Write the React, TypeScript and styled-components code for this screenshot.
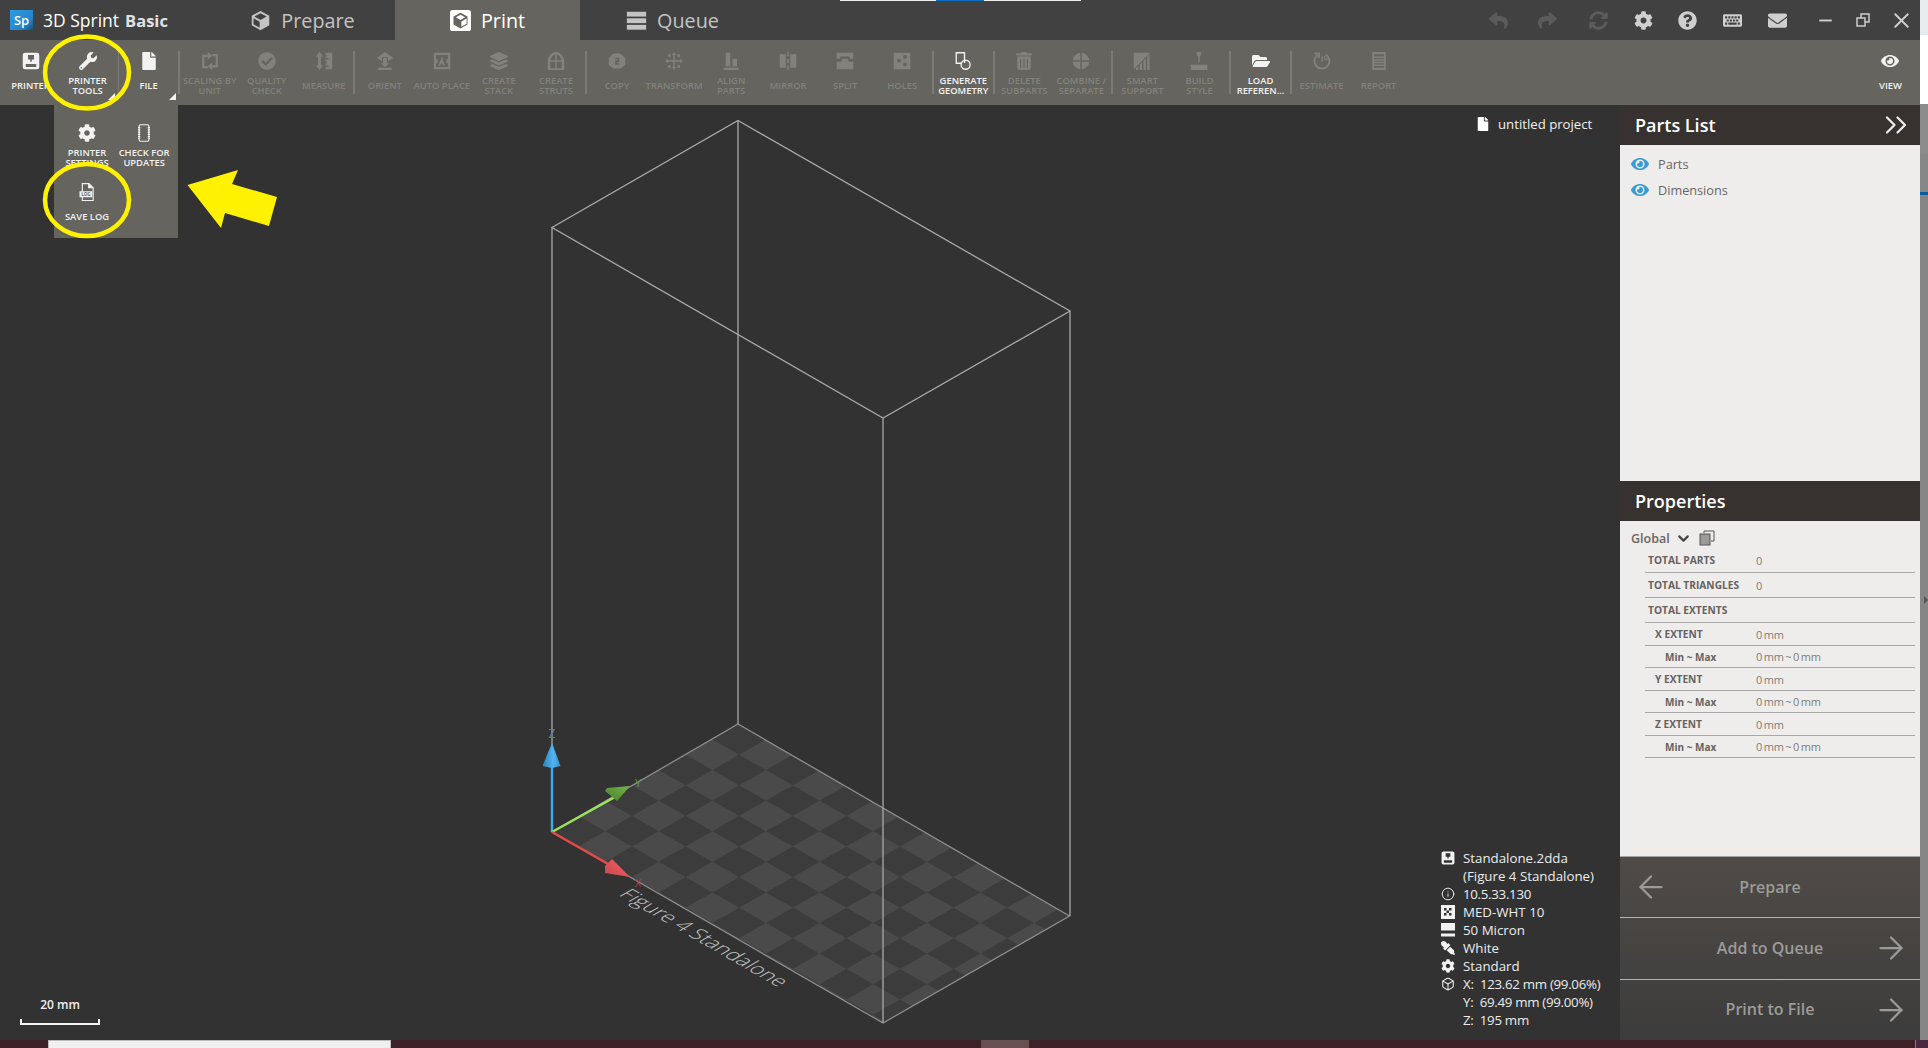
import React from "react";
import styled, { createGlobalStyle } from "styled-components";
import {
  FaCheckCircle,
  FaCog,
  FaEnvelope,
  FaEye,
  FaEyeDropper,
  FaFile,
  FaFolderOpen,
  FaKeyboard,
  FaLayerGroup,
  FaQuestionCircle,
  FaReply,
  FaShare,
  FaSyncAlt,
  FaTrashAlt,
  FaWrench,
} from "react-icons/fa";
import { ArrowLeft, ArrowRight, Box, ChevronDown, ChevronsRight, Info, X } from "lucide-react";

const GlobalStyle = createGlobalStyle`
  html, body {
    margin: 0;
    padding: 0;
    background: #323232;
    font-family: "Open Sans", "Liberation Sans", sans-serif;
  }
`;

const Page = styled.div`
  position: relative;
  width: 1928px;
  height: 1048px;
  overflow: hidden;
  display: flex;
  flex-direction: column;
`;

const Desktop = styled.div`
  flex: 1;
  min-height: 0;
  display: flex;
`;

const AppWindow = styled.div`
  position: relative;
  width: 1920px;
  display: flex;
  flex-direction: column;
`;

const TitleBar = styled.header`
  height: 40px;
  flex: none;
  display: flex;
  align-items: stretch;
  background: #414141;
`;

const Brand = styled.div`
  width: 210px;
  display: flex;
  align-items: center;
  padding-left: 10px;
  box-sizing: border-box;
  color: #fff;
  font-size: 17.5px;
  white-space: nowrap;
`;

const Logo = styled.div`
  width: 23px;
  height: 20px;
  margin-right: 10px;
  display: flex;
  align-items: center;
  justify-content: center;
  background: linear-gradient(135deg, #2f9be0 0%, #2585c8 70%, #14507f 100%);
  color: #fff;
  font-size: 13px;
  font-weight: 600;
`;

const BrandSub = styled.span`
  margin-left: 6px;
  font-size: 16.5px;
  font-weight: 700;
  color: #e2e2e2;
`;

const Tab = styled.div<{ $active?: boolean }>`
  width: 185px;
  display: flex;
  align-items: center;
  justify-content: center;
  gap: 10px;
  font-size: 19.8px;
  background: ${(p) => (p.$active ? "#66645e" : "transparent")};
  color: ${(p) => (p.$active ? "#fff" : "#c4c4c4")};
  svg {
    width: 21px;
    height: 21px;
  }
`;

const TopLine = styled.div`
  position: absolute;
  top: 0;
  left: 840px;
  width: 241px;
  height: 1px;
  background: linear-gradient(90deg, #eee 0 96px, #0f6cc0 96px 144px, #eee 144px);
`;

const WindowTools = styled.div`
  margin-left: auto;
  display: flex;
  align-items: center;
`;

const WindowTool = styled.div<{ $dim?: boolean; $w?: number; $icon?: number; $gap?: number }>`
  width: ${(p) => p.$w ?? 45}px;
  margin-left: ${(p) => p.$gap ?? 0}px;
  display: flex;
  justify-content: center;
  align-items: center;
  color: ${(p) => (p.$dim ? "#5b5b5b" : "#cfcfcf")};
  svg {
    width: ${(p) => p.$icon ?? 19}px;
    height: ${(p) => p.$icon ?? 19}px;
  }
`;

const ToolBar = styled.nav`
  height: 65px;
  flex: none;
  display: flex;
  align-items: flex-start;
  padding-left: 2px;
  box-sizing: border-box;
  background: #66645e;
`;

const ToolButton = styled.div<{ $off?: boolean }>`
  position: relative;
  width: 57.05px;
  flex: none;
  padding-top: 12px;
  display: flex;
  flex-direction: column;
  align-items: center;
  color: ${(p) => (p.$off ? "#82817b" : "#f2f2f2")};
  svg {
    width: 18px;
    height: 18px;
  }
`;

const Corner = styled.span`
  position: absolute;
  right: 1px;
  top: 53px;
  width: 0;
  height: 0;
  border-left: 7px solid transparent;
  border-bottom: 7px solid #f4f4f4;
`;

const ToolLabel = styled.div`
  height: 20px;
  margin-top: 6px;
  display: flex;
  align-items: center;
  justify-content: center;
  text-align: center;
  white-space: pre;
  font-size: 9.4px;
  line-height: 10px;
  font-weight: 600;
`;

const ToolSep = styled.div<{ $faint?: boolean }>`
  width: 4px;
  flex: none;
  height: 43px;
  margin-top: 11px;
  display: flex;
  justify-content: center;
  &::before {
    content: "";
    width: ${(p) => (p.$faint ? 1 : 2)}px;
    background: #7b7a74;
  }
`;

const ViewButton = styled(ToolButton)`
  margin-left: auto;
  margin-right: 1px;
`;

const Body = styled.div`
  flex: 1;
  min-height: 0;
  display: flex;
`;

const Viewport = styled.main`
  position: relative;
  flex: 1;
  background: #323232;
`;

const Scene = styled.svg`
  display: block;
  width: 1620px;
  height: 935px;
`;

const Dropdown = styled.div`
  position: absolute;
  top: 0;
  left: 54px;
  width: 124px;
  height: 133px;
  box-sizing: border-box;
  padding: 7px 0 0 4.5px;
  display: grid;
  grid-template-columns: 57.1px 57.1px;
  grid-auto-rows: min-content;
  row-gap: 3px;
  background: #66645e;
`;

const ProjectName = styled.div`
  position: absolute;
  top: 10px;
  left: 1477px;
  display: flex;
  align-items: center;
  gap: 9px;
  color: #f0f0f0;
  font-size: 13.2px;
  svg {
    width: 12px;
    height: 14px;
    color: #fff;
  }
`;

const ScaleBar = styled.div`
  position: absolute;
  left: 20px;
  bottom: 15px;
  width: 80px;
  text-align: center;
  color: #f0f0f0;
  font-size: 12px;
  font-weight: 600;
  &::after {
    content: "";
    display: block;
    height: 4px;
    margin-top: 6px;
    border: 2px solid #f4f4f4;
    border-top: none;
  }
`;

const InfoBlock = styled.div`
  position: absolute;
  left: 1441px;
  bottom: 11px;
  color: #ececec;
  font-size: 13.3px;
  line-height: 18px;
`;

const InfoRow = styled.div<{ $tight?: boolean }>`
  height: 18px;
  display: flex;
  align-items: center;
  gap: 8px;
  white-space: pre;
  letter-spacing: ${(p) => (p.$tight ? "-0.3px" : "0")};
`;

const InfoIcon = styled.span`
  width: 14px;
  height: 14px;
  display: flex;
  align-items: center;
  justify-content: center;
  color: #f2f2f2;
  svg {
    width: 14px;
    height: 14px;
  }
`;

const SidePanel = styled.aside`
  width: 300px;
  flex: none;
  display: flex;
  flex-direction: column;
`;

const PanelHeader = styled.div`
  height: 40px;
  flex: none;
  display: flex;
  align-items: center;
  justify-content: space-between;
  padding: 0 6px 0 15px;
  box-sizing: border-box;
  background: #37322f;
  color: #fff;
  font-size: 18px;
  font-weight: 600;
  svg {
    width: 36px;
    height: 36px;
    color: #ececec;
  }
`;

const PartsBody = styled.div`
  height: 336px;
  flex: none;
  box-sizing: border-box;
  padding-top: 6px;
  background: #eeedeb;
`;

const PartRow = styled.div`
  height: 26px;
  display: flex;
  align-items: center;
  gap: 8px;
  padding-left: 10px;
  color: #6a6663;
  font-size: 12.7px;
  svg {
    width: 20px;
    height: 16px;
    color: #3b9bd4;
  }
`;

const PropsBody = styled.div`
  flex: 1;
  min-height: 0;
  box-sizing: border-box;
  background: #eeedeb;
  border-bottom: 1px solid #a5a5a5;
`;

const ScopeRow = styled.div`
  height: 27px;
  box-sizing: border-box;
  padding: 7px 0 0 11px;
  display: flex;
  align-items: center;
  color: #6a6663;
  font-size: 12.5px;
  font-weight: 600;
`;

const ScopeChevron = styled(ChevronDown)`
  width: 17px;
  height: 17px;
  margin-left: 5px;
  color: #444;
`;

const ScopeCopy = styled.svg`
  width: 16px;
  height: 16px;
  margin-left: 7px;
  color: #555;
`;

const PropRow = styled.div<{ $level: number }>`
  height: ${(p) => [25, 23, 22][p.$level]}px;
  box-sizing: border-box;
  margin: 0 5px 0 25px;
  display: flex;
  align-items: center;
  border-bottom: 1px solid #a9a9a9;
  color: #807d7a;
  font-size: 11px;
  word-spacing: -1.5px;
`;

const PropName = styled.div<{ $level: number }>`
  width: 111px;
  flex: none;
  box-sizing: border-box;
  padding-left: ${(p) => [3, 10, 20][p.$level]}px;
  color: #66625f;
  font-size: ${(p) => (p.$level === 2 ? 10 : 10.2)}px;
  font-weight: 700;
  white-space: nowrap;
  word-spacing: 0;
`;

const Actions = styled.div`
  height: 183px;
  flex: none;
  display: flex;
  flex-direction: column;
  background: linear-gradient(#504b47, #3c3c3c);
`;

const ActionButton = styled.div`
  position: relative;
  flex: 1;
  display: flex;
  align-items: center;
  justify-content: center;
  padding-bottom: 1px;
  color: #9c9b99;
  font-size: 16px;
  font-weight: 600;
  & + & {
    border-top: 1px solid #b4b4b2;
  }
`;

const ActionArrow = styled.span<{ $left?: boolean }>`
  position: absolute;
  top: 50%;
  margin-top: -18px;
  ${(p) => (p.$left ? "left: 12.5px;" : "right: 11.5px;")}
  height: 36px;
  color: #9c9b99;
  svg {
    width: 36px;
    height: 36px;
  }
`;

const Gutter = styled.div`
  position: relative;
  width: 8px;
  flex: none;
  display: flex;
  flex-direction: column;
  background: #868686;
  &::after {
    content: "";
    position: absolute;
    top: 596px;
    left: 4px;
    border-left: 4px solid #555;
    border-top: 4px solid transparent;
    border-bottom: 4px solid transparent;
  }
`;

const GutterBand = styled.div<{ $h: number; $c: string }>`
  height: ${(p) => p.$h}px;
  background: ${(p) => p.$c};
`;

const TaskBar = styled.footer`
  position: relative;
  height: 8px;
  flex: none;
  display: flex;
  overflow: hidden;
  padding-left: 48px;
  background: #3e2029;
`;

const TaskWindow = styled.div`
  width: 343px;
  box-sizing: border-box;
  background: #f0f0f0;
  border: 1px solid #bcbcbc;
  border-bottom: none;
`;

const TaskActive = styled.div`
  width: 48px;
  margin-left: 590px;
  background: #674f52;
`;

const Clock = styled.div`
  margin-left: auto;
  margin-right: 70px;
  padding-top: 5px;
  color: #fff;
  font-size: 11px;
  line-height: 14px;
`;

const TaskEnd = styled.div`
  position: absolute;
  right: 0;
  top: 0;
  bottom: 0;
  width: 12px;
  background: #4a2840;
  border-left: 1px solid #8b7a80;
`;

const Annotations = styled.svg`
  position: absolute;
  top: 0;
  left: 0;
  width: 300px;
  height: 250px;
  pointer-events: none;
`;

const CubeIcon = () => (
  <svg viewBox="0 0 24 24" fill="currentColor">
    <path d="M12 1 22 6.5v11L12 23 2 17.500v-11zM12 3.600 5 7.500l7 4 7-4zM4 9.300v7l7 4v-7z" fillRule="evenodd" />
  </svg>
);

const PrintCubeIcon = () => (
  <svg viewBox="0 0 24 24" fill="currentColor">
    <path
      d="M3 0h18a3 3 0 0 1 3 3v18a3 3 0 0 1-3 3H3a3 3 0 0 1-3-3V3a3 3 0 0 1 3-3zM12 3 4 7.500v9l8 4.500 8-4.500v-9zM12 5.300 17.300 8.300 12 11.300 6.700 8.300zM13 13l6-3.300v6l-6 3.300z"
      fillRule="evenodd"
    />
  </svg>
);

const BarsIcon = () => (
  <svg viewBox="0 0 24 24" fill="currentColor">
    <rect x="1" y="2" width="22" height="5.500" />
    <rect x="1" y="9.500" width="22" height="5.500" />
    <rect x="1" y="17" width="22" height="5.500" />
  </svg>
);

const PrinterFaceIcon = () => (
  <svg viewBox="0 0 24 24" fill="currentColor">
    <path
      d="M4 1h16a3 3 0 0 1 3 3v16a3 3 0 0 1-3 3H4a3 3 0 0 1-3-3V4a3 3 0 0 1 3-3zM8 4v6h3v3h2v-3h3V4zM5 16v4h14v-4z"
      fillRule="evenodd"
    />
  </svg>
);

const ScalingIcon = () => (
  <svg viewBox="0 0 24 24" fill="currentColor">
    <path d="M9 5H3v15h6M15 19h6V4h-6" fill="none" stroke="currentColor" strokeWidth="3" />
    <path d="M9 0 15 5 9 10zM15 14 9 19l6 5z" />
  </svg>
);

const MeasureIcon = () => (
  <svg viewBox="0 0 24 24" fill="currentColor">
    <path d="M6 0 11 6H8v12h3l-5 6-5-6h3V6H1z" />
    <path d="M14 1h9v22h-9v-3h4v-2h-4v-3h2v-2h-2V10h4V8h-4V6h2V4h-2z" />
  </svg>
);

const OrientIcon = () => (
  <svg viewBox="0 0 24 24" fill="currentColor">
    <path d="M12 0 23 8l-7 4V7H8v5L1 8z" />
    <path d="M9.500 8h5v7H18l-6 5-6-5h3.500z" />
    <rect x="3" y="21" width="18" height="3" />
  </svg>
);

const AutoPlaceIcon = () => (
  <svg viewBox="0 0 24 24" fill="currentColor">
    <path d="M1 1h22v22H1zM4 4v5h2v6H4v5h16v-5h-2V9h2V4z" fillRule="evenodd" />
    <path d="M12 6 16 18h-2.500l-.7-2.500h-2.600l-.7 2.500H7z" />
  </svg>
);

const StrutsIcon = () => (
  <svg viewBox="0 0 24 24" fill="currentColor">
    <path
      d="M1 24V13C1 6 6 0 12 0s11 6 11 13v11zM11 3.200C7.500 4 5 7.500 4.600 11H11zM13 3.200V11h6.400C19 7.500 16.500 4 13 3.200zM4.500 13v8.500H11V13zM13 13v8.500h6.500V13z"
      fillRule="evenodd"
    />
  </svg>
);

const CopyCubeIcon = () => (
  <svg viewBox="0 0 24 24" fill="currentColor">
    <path
      d="M7 2h9l7 6v9l-6 5H7l-6-5V8zM9.500 7.500v2h3.500v1.500H9.500V17H15v-2h-3v-1.500h3V7.500z"
      fillRule="evenodd"
    />
  </svg>
);

const TransformIcon = () => (
  <svg viewBox="0 0 24 24" fill="currentColor">
    <path d="M12 0 15 4h-2v7h7v-2l4 3-4 3v-2h-7v7h2l-3 4-3-4h2v-7H4v2l-4-3 4-3v2h7V4H9z" />
    <rect x="4" y="3" width="3.500" height="3.500" />
    <rect x="16.500" y="3" width="3.500" height="3.500" />
    <rect x="4" y="17.500" width="3.500" height="3.500" />
    <rect x="16.500" y="17.500" width="3.500" height="3.500" />
  </svg>
);

const AlignIcon = () => (
  <svg viewBox="0 0 24 24" fill="currentColor">
    <rect x="5" y="1" width="6" height="18" />
    <rect x="14" y="9" width="6" height="10" />
    <rect x="2" y="21" width="20" height="3" />
  </svg>
);

const MirrorIcon = () => (
  <svg viewBox="0 0 24 24" fill="currentColor">
    <rect x="1" y="3" width="8" height="18" />
    <rect x="15" y="3" width="8" height="18" />
    <rect x="11" y="0" width="2" height="6" />
    <rect x="11" y="9" width="2" height="6" />
    <rect x="11" y="18" width="2" height="6" />
  </svg>
);

const SplitIcon = () => (
  <svg viewBox="0 0 24 24" fill="currentColor">
    <path d="M1 1h22v8h-4l-1-3H6L5 9H1z" />
    <path d="M8 9h8l1 4h6v10H1V13h6z" />
  </svg>
);

const HolesIcon = () => (
  <svg viewBox="0 0 24 24" fill="currentColor">
    <path
      d="M1 1h22v22H1zM16 4a2.500 2.500 0 1 0 0 5 2.500 2.500 0 0 0 0-5zM8 9a2.500 2.500 0 1 0 0 5 2.500 2.500 0 0 0 0-5zM16 14a2.500 2.500 0 1 0 0 5 2.500 2.500 0 0 0 0-5z"
      fillRule="evenodd"
    />
  </svg>
);

const GeometryIcon = () => (
  <svg viewBox="0 0 24 24" fill="none" stroke="currentColor" strokeWidth="1.800">
    <path d="M14 14.500V1H3v14h7" />
    <circle cx="15.500" cy="17" r="6" />
  </svg>
);

const CombineIcon = () => (
  <svg viewBox="0 0 24 24" fill="currentColor">
    <path d="M11 1v10H1A11 11 0 0 1 11 1zM13 1a11 11 0 0 1 10 10H13zM1 13h10v10A11 11 0 0 1 1 13zM13 13h10a11 11 0 0 1-10 10z" />
  </svg>
);

const SmartSupportIcon = () => (
  <svg viewBox="0 0 24 24" fill="currentColor">
    <path d="M1 1h22L1 23z" />
    <path d="M22 3v21h-3V6.500zM17 8.500V24h-3V11.500zM12 13.500V24H9v-7.500zM7 18.500V24H4v-2.500z" />
  </svg>
);

const BuildStyleIcon = () => (
  <svg viewBox="0 0 24 24" fill="currentColor">
    <path d="M9 0h6v4l-2 2v8h-2V6L9 4z" />
    <rect x="1" y="17" width="22" height="7" />
  </svg>
);

const EstimateIcon = () => (
  <svg viewBox="0 0 24 24" fill="none" stroke="currentColor" strokeWidth="2.500">
    <path d="M6 4A10 10 0 1 0 17 3.500" />
    <path d="M2 2h6v6" />
    <path d="M12 6v7M16 5.500l-1.500 3M19 9l-3 1.500" strokeWidth="2" />
  </svg>
);

const ReportIcon = () => (
  <svg viewBox="0 0 24 24" fill="currentColor">
    <path
      d="M3 0h18v24H3zM5.500 3v3h13V3zM5.500 8v1.500h13V8zM5.500 11.500V13h13v-1.500zM5.500 15v1.500h13V15zM5.500 18.500V21h13v-2.500z"
      fillRule="evenodd"
    />
  </svg>
);

const ChipIcon = () => (
  <svg viewBox="0 0 24 24" fill="none" stroke="currentColor">
    <rect x="5.500" y="1" width="13" height="22" rx="2" strokeWidth="1.600" />
    <path d="M5.500 4v16M18.500 4v16" strokeWidth="3" strokeDasharray="1.500 1.500" />
  </svg>
);

const SaveLogIcon = () => (
  <svg viewBox="0 0 24 24" fill="currentColor">
    <path d="M5 0h10l6 6v18H5zM6.500 1.500v21h13V7h-6V1.500z" fillRule="evenodd" />
    <rect x="2" y="11" width="17" height="8" />
    <text x="10.500" y="17.500" fontSize="6" textAnchor="middle" fill="#66645e" fontWeight="700">
      LOG
    </text>
  </svg>
);

const RestoreIcon = () => (
  <svg viewBox="0 0 24 24" fill="none" stroke="currentColor" strokeWidth="2.200">
    <rect x="3" y="9" width="12" height="12" />
    <path d="M9 9V3h12v12h-6" />
  </svg>
);

const MinimizeIcon = () => (
  <svg viewBox="0 0 24 24" fill="currentColor">
    <rect x="2" y="10.500" width="20" height="3" />
  </svg>
);

const CheckerIcon = () => (
  <svg viewBox="0 0 14 14" fill="currentColor">
    <path d="M0 0h14v14H0zM3 3v2.500h2.500V3zM8 3v2.500h2.500V3zM5.500 5.500V8H8V5.500zM3 8v2.500h2.500V8zM8 8v2.500h2.500V8z" fillRule="evenodd" />
  </svg>
);

const LayerIcon = () => (
  <svg viewBox="0 0 14 14" fill="currentColor">
    <rect x="0" y="0" width="14" height="7.500" />
    <rect x="0" y="10.500" width="14" height="3" />
  </svg>
);

const FlippedDropper = styled(FaEyeDropper)`
  transform: scaleX(-1);
`;

type Tool = { label: string; icon?: React.ReactNode; off?: boolean; flag?: boolean } | "sep" | "faint";

const tools: Tool[] = [
  { label: "PRINTER", icon: <PrinterFaceIcon /> },
  { label: "PRINTER\nTOOLS", icon: <FaWrench />, flag: true },
  "faint",
  { label: "FILE", icon: <FaFile />, flag: true },
  "sep",
  { label: "SCALING BY\nUNIT", icon: <ScalingIcon />, off: true },
  { label: "QUALITY\nCHECK", icon: <FaCheckCircle />, off: true },
  { label: "MEASURE", icon: <MeasureIcon />, off: true },
  "sep",
  { label: "ORIENT", icon: <OrientIcon />, off: true },
  { label: "AUTO PLACE", icon: <AutoPlaceIcon />, off: true },
  { label: "CREATE\nSTACK", icon: <FaLayerGroup />, off: true },
  { label: "CREATE\nSTRUTS", icon: <StrutsIcon />, off: true },
  "sep",
  { label: "COPY", icon: <CopyCubeIcon />, off: true },
  { label: "TRANSFORM", icon: <TransformIcon />, off: true },
  { label: "ALIGN\nPARTS", icon: <AlignIcon />, off: true },
  { label: "MIRROR", icon: <MirrorIcon />, off: true },
  { label: "SPLIT", icon: <SplitIcon />, off: true },
  { label: "HOLES", icon: <HolesIcon />, off: true },
  "sep",
  { label: "GENERATE\nGEOMETRY", icon: <GeometryIcon /> },
  "sep",
  { label: "DELETE\nSUBPARTS", icon: <FaTrashAlt />, off: true },
  { label: "COMBINE /\nSEPARATE", icon: <CombineIcon />, off: true },
  "sep",
  { label: "SMART\nSUPPORT", icon: <SmartSupportIcon />, off: true },
  { label: "BUILD\nSTYLE", icon: <BuildStyleIcon />, off: true },
  "sep",
  { label: "LOAD\nREFEREN...", icon: <FaFolderOpen /> },
  "sep",
  { label: "ESTIMATE", icon: <EstimateIcon />, off: true },
  { label: "REPORT", icon: <ReportIcon />, off: true },
];

const properties: { name: string; value?: string; level: number }[] = [
  { name: "TOTAL PARTS", value: "0", level: 0 },
  { name: "TOTAL TRIANGLES", value: "0", level: 0 },
  { name: "TOTAL EXTENTS", level: 0 },
  { name: "X EXTENT", value: "0 mm", level: 1 },
  { name: "Min ~ Max", value: "0 mm ~ 0 mm", level: 2 },
  { name: "Y EXTENT", value: "0 mm", level: 1 },
  { name: "Min ~ Max", value: "0 mm ~ 0 mm", level: 2 },
  { name: "Z EXTENT", value: "0 mm", level: 1 },
  { name: "Min ~ Max", value: "0 mm ~ 0 mm", level: 2 },
];

const info: { icon?: React.ReactNode; text: string; tight?: boolean }[] = [
  { icon: <PrinterFaceIcon />, text: "Standalone.2dda" },
  { text: "(Figure 4 Standalone)" },
  { icon: <Info strokeWidth={1.6} />, text: "10.5.33.130", tight: true },
  { icon: <CheckerIcon />, text: "MED-WHT 10" },
  { icon: <LayerIcon />, text: "50 Micron" },
  { icon: <FlippedDropper />, text: "White" },
  { icon: <FaCog />, text: "Standard" },
  { icon: <Box strokeWidth={1.8} />, text: "X:  123.62 mm (99.06%)", tight: true },
  { text: "Y:  69.49 mm (99.00%)", tight: true },
  { text: "Z:  195 mm", tight: true },
];

const Floor = () => (
  <>
    <defs>
      <pattern
        id="checker"
        patternUnits="userSpaceOnUse"
        width="2"
        height="2"
        patternTransform="matrix(26.8 -15.3 -26.8 -15.3 739.2 785.3)"
      >
        <rect width="2" height="2" fill="#4a4a4a" />
        <rect width="1" height="1" fill="#3c3c3c" />
        <rect x="1" y="1" width="1" height="1" fill="#3c3c3c" />
      </pattern>
      <linearGradient id="coneBlue" x1="0" x2="1">
        <stop offset="0" stopColor="#2f7fb5" />
        <stop offset="0.6" stopColor="#4fb6f2" />
        <stop offset="1" stopColor="#3a90c8" />
      </linearGradient>
      <linearGradient id="coneGreen" x1="0" x2="1" y1="1" y2="0">
        <stop offset="0" stopColor="#4d7d33" />
        <stop offset="1" stopColor="#72b545" />
      </linearGradient>
      <linearGradient id="coneRed" x1="0" x2="1" y1="1" y2="0">
        <stop offset="0" stopColor="#c8454a" />
        <stop offset="1" stopColor="#f8646a" />
      </linearGradient>
    </defs>
    <polygon points="552,832 738,724 1069.500,916 883,1023" fill="url(#checker)" stroke="#8d8d8d" strokeWidth="1.300" />
  </>
);

const BuildVolume = () => (
  <g fill="none" stroke="#a9a9a9" strokeWidth="1.300">
    <polygon points="738,120.500 1070,311 883,418 552,227.500" />
    <line x1="552" y1="227.500" x2="552" y2="832" />
    <line x1="738" y1="120.500" x2="738" y2="724" />
    <line x1="1070" y1="311" x2="1070" y2="916" />
    <line x1="883" y1="418" x2="883" y2="1023" />
  </g>
);

const Axes = () => (
  <g>
    <line x1="552" y1="832" x2="552" y2="765" stroke="#45a9e8" strokeWidth="2.400" />
    <polygon points="552,743 560.500,766 552,768 542.500,766" fill="url(#coneBlue)" />
    <text x="552" y="738" fontSize="12" textAnchor="middle" fill="#3f87b8">
      Z
    </text>
    <line x1="552" y1="832" x2="615" y2="797" stroke="#9be35a" strokeWidth="2.400" />
    <polygon points="630,786 617,801 605,791 607,788" fill="url(#coneGreen)" />
    <text x="638" y="787" fontSize="11" textAnchor="middle" fill="#5f9f3a">
      Y
    </text>
    <line x1="552" y1="832" x2="610" y2="865" stroke="#e84848" strokeWidth="2.400" />
    <polygon points="630,877 605,873 605,866 612,859" fill="url(#coneRed)" />
    <text x="638" y="887" fontSize="11" textAnchor="middle" fill="#b83a3a">
      X
    </text>
  </g>
);

export default function App() {
  return (
    <Page>
      <GlobalStyle />
      <Desktop>
        <AppWindow>
          <TitleBar>
            <Brand>
              <Logo>Sp</Logo>
              3D Sprint
              <BrandSub>Basic</BrandSub>
            </Brand>
            <Tab>
              <CubeIcon />
              Prepare
            </Tab>
            <Tab $active>
              <PrintCubeIcon />
              Print
            </Tab>
            <Tab>
              <BarsIcon />
              Queue
            </Tab>
            <TopLine />
            <WindowTools>
              <WindowTool $dim $w={41}><FaReply /></WindowTool>
              <WindowTool $dim $w={57}><FaShare /></WindowTool>
              <WindowTool $dim><FaSyncAlt /></WindowTool>
              <WindowTool><FaCog /></WindowTool>
              <WindowTool $w={44}><FaQuestionCircle /></WindowTool>
              <WindowTool><FaKeyboard /></WindowTool>
              <WindowTool><FaEnvelope /></WindowTool>
              <WindowTool $w={38} $icon={15} $gap={6.5}><MinimizeIcon /></WindowTool>
              <WindowTool $w={38} $icon={16}><RestoreIcon /></WindowTool>
              <WindowTool $w={38} $icon={25}><X strokeWidth={1.8} /></WindowTool>
            </WindowTools>
          </TitleBar>
          <ToolBar>
            {tools.map((tool, i) =>
              tool === "sep" || tool === "faint" ? (
                <ToolSep key={i} $faint={tool === "faint"} />
              ) : (
                <ToolButton key={i} $off={tool.off}>
                  {tool.icon}
                  <ToolLabel>{tool.label}</ToolLabel>
                  {tool.flag && <Corner />}
                </ToolButton>
              )
            )}
            <ViewButton>
              <FaEye />
              <ToolLabel>VIEW</ToolLabel>
            </ViewButton>
          </ToolBar>
          <Body>
            <Viewport>
              <Scene viewBox="0 105 1620 935">
                <Floor />
                <BuildVolume />
                <Axes />
                <text
                  transform="matrix(.866 .5 -.866 .5 618 895)"
                  fontSize="20.700"
                  fontFamily="Open Sans, sans-serif"
                  fontWeight="300"
                  fill="#c2c2c2"
                >
                  Figure 4 Standalone
                </text>
              </Scene>
              <Dropdown>
                <ToolButton>
                  <FaCog />
                  <ToolLabel>{"PRINTER\nSETTINGS"}</ToolLabel>
                </ToolButton>
                <ToolButton>
                  <ChipIcon />
                  <ToolLabel>{"CHECK FOR\nUPDATES"}</ToolLabel>
                </ToolButton>
                <ToolButton>
                  <SaveLogIcon />
                  <ToolLabel>SAVE LOG</ToolLabel>
                </ToolButton>
              </Dropdown>
              <ProjectName>
                <FaFile />
                untitled project
              </ProjectName>
              <ScaleBar>20 mm</ScaleBar>
              <InfoBlock>
                {info.map((row) => (
                  <InfoRow key={row.text} $tight={row.tight}>
                    <InfoIcon>{row.icon}</InfoIcon>
                    {row.text}
                  </InfoRow>
                ))}
              </InfoBlock>
            </Viewport>
            <SidePanel>
              <PanelHeader>
                Parts List
                <ChevronsRight strokeWidth={1.5} />
              </PanelHeader>
              <PartsBody>
                <PartRow>
                  <FaEye />
                  Parts
                </PartRow>
                <PartRow>
                  <FaEye />
                  Dimensions
                </PartRow>
              </PartsBody>
              <PanelHeader>Properties</PanelHeader>
              <PropsBody>
                <ScopeRow>
                  Global
                  <ScopeChevron strokeWidth={3} />
                  <ScopeCopy viewBox="0 0 16 16" fill="none" stroke="currentColor">
                    <path d="M5 3V1h10v10h-3" />
                    <rect x="1" y="4" width="10" height="11" fill="#9a9a9a" />
                  </ScopeCopy>
                </ScopeRow>
                {properties.map((row, i) => (
                  <PropRow key={i} $level={row.level}>
                    <PropName $level={row.level}>{row.name}</PropName>
                    {row.value}
                  </PropRow>
                ))}
              </PropsBody>
              <Actions>
                <ActionButton>
                  <ActionArrow $left><ArrowLeft strokeWidth={1.5} /></ActionArrow>
                  Prepare
                </ActionButton>
                <ActionButton>
                  Add to Queue
                  <ActionArrow><ArrowRight strokeWidth={1.5} /></ActionArrow>
                </ActionButton>
                <ActionButton>
                  Print to File
                  <ActionArrow><ArrowRight strokeWidth={1.5} /></ActionArrow>
                </ActionButton>
              </Actions>
            </SidePanel>
          </Body>
        </AppWindow>
        <Gutter>
          <GutterBand $h={35} $c="#e9ecef" />
          <GutterBand $h={69} $c="#ffffff" />
          <GutterBand $h={50} $c="#8c8c8c" />
          <GutterBand $h={38} $c="#878787" />
          <GutterBand $h={3} $c="#0d5a9e" />
        </Gutter>
      </Desktop>
      <TaskBar>
        <TaskWindow />
        <TaskActive />
        <Clock>11:39</Clock>
        <TaskEnd />
      </TaskBar>
      <Annotations viewBox="0 0 300 250">
        <g fill="none" stroke="#fff200" strokeWidth="4.500">
          <ellipse cx="87" cy="72.500" rx="42" ry="36" />
          <ellipse cx="87" cy="200" rx="42" ry="36" />
        </g>
        <polygon points="187.500,185 238,170 232,184 277,197 269,226 225,213 221,228" fill="#fff200" />
      </Annotations>
    </Page>
  );
}
